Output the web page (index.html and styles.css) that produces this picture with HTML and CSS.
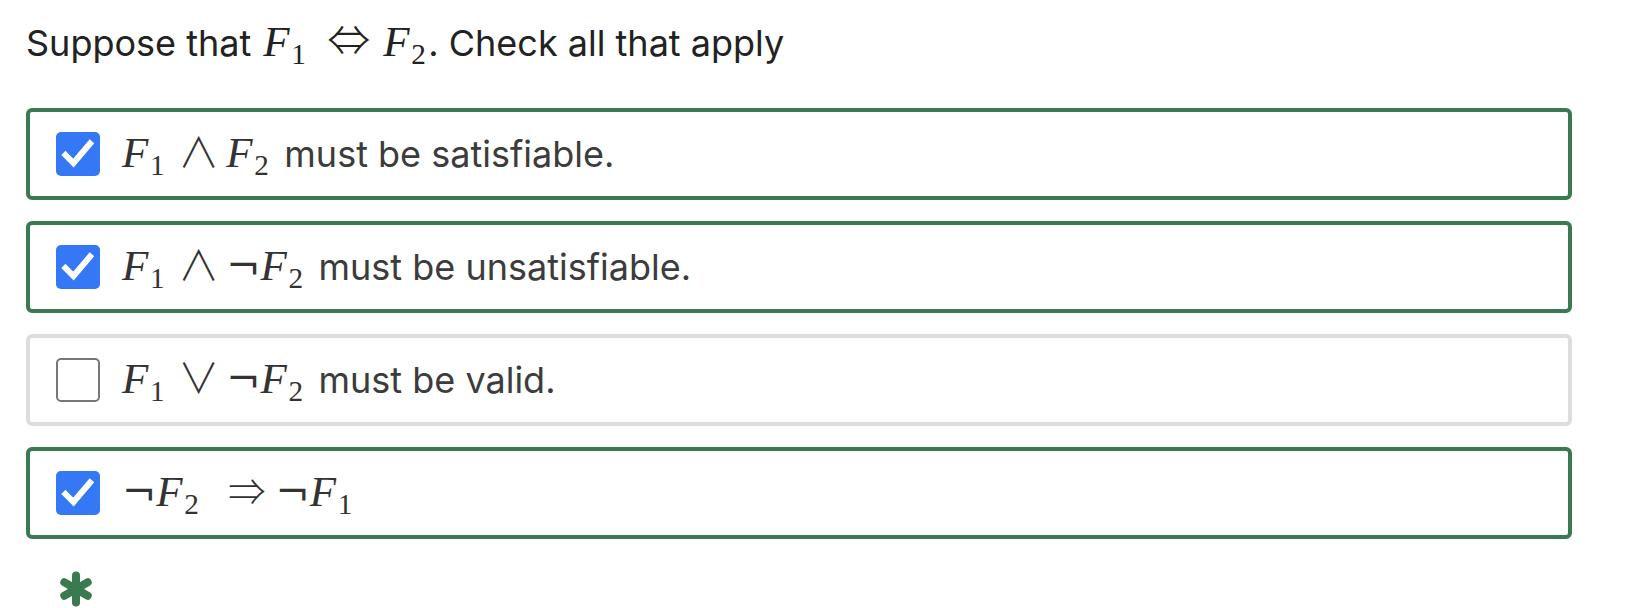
FILE: index.html
```html
<!DOCTYPE html>
<html lang="en">
<head>
<meta charset="utf-8">
<title>Question</title>
<link rel="stylesheet" href="styles.css">
</head>
<body>
<main class="question">
  <p class="prompt">Suppose that <span class="math"><span class="mi">F</span><span class="sub">1</span><span class="rel iff">⇔</span><span class="mi">F</span><span class="sub">2</span></span>. Check all that apply</p>
  <ul class="options">
    <li class="option is-selected">
      <span class="box is-checked"><svg viewBox="0 0 44 44" width="44" height="44"><path d="M9.5 23 L17.5 31 L34 11.5" fill="none" stroke="#fff" stroke-width="6" stroke-linecap="square" stroke-linejoin="miter"/></svg></span>
      <span class="label"><span class="math"><span class="mi">F</span><span class="sub">1</span><span class="bin">∧</span><span class="mi">F</span><span class="sub">2</span></span> must be satisfiable.</span>
    </li>
    <li class="option is-selected">
      <span class="box is-checked"><svg viewBox="0 0 44 44" width="44" height="44"><path d="M9.5 23 L17.5 31 L34 11.5" fill="none" stroke="#fff" stroke-width="6" stroke-linecap="square" stroke-linejoin="miter"/></svg></span>
      <span class="label"><span class="math"><span class="mi">F</span><span class="sub">1</span><span class="bin">∧</span><span class="mo">¬</span><span class="mi">F</span><span class="sub">2</span></span> must be unsatisfiable.</span>
    </li>
    <li class="option">
      <span class="box"></span>
      <span class="label"><span class="math"><span class="mi">F</span><span class="sub">1</span><span class="bin">∨</span><span class="mo">¬</span><span class="mi">F</span><span class="sub">2</span></span> must be valid.</span>
    </li>
    <li class="option is-selected">
      <span class="box is-checked"><svg viewBox="0 0 44 44" width="44" height="44"><path d="M9.5 23 L17.5 31 L34 11.5" fill="none" stroke="#fff" stroke-width="6" stroke-linecap="square" stroke-linejoin="miter"/></svg></span>
      <span class="label"><span class="math"><span class="mo">¬</span><span class="mi">F</span><span class="sub">2</span><span class="rel implies">⇒</span><span class="mo">¬</span><span class="mi">F</span><span class="sub">1</span></span></span>
    </li>
  </ul>
  <div class="status">
    <svg class="asterisk" viewBox="0 0 36 36" width="36" height="36">
      <g stroke="#3a7a50" stroke-width="8" stroke-linecap="round">
        <line x1="18" y1="4.5" x2="18" y2="31.5"/>
        <line x1="6.3" y1="11.25" x2="29.7" y2="24.75"/>
        <line x1="6.3" y1="24.75" x2="29.7" y2="11.25"/>
      </g>
    </svg>
  </div>
</main>
</body>
</html>
```

FILE: styles.css
```css
html, body {
  margin: 0;
  padding: 0;
  background: #ffffff;
}

body {
  font-family: Inter, "Liberation Sans", sans-serif;
}

.question {
  width: 1546px;
  padding: 16px 0 0 26px;
}

.prompt {
  margin: 0;
  font-size: 36px;
  line-height: 54px;
  height: 54px;
  color: #222222;
}

.math {
  font-family: "Liberation Serif", "DejaVu Serif", serif;
  font-size: 43px;
  line-height: 1;
  color: #333333;
  white-space: nowrap;
}

.prompt .math {
  color: #222222;
  margin-left: 2px;
}

.mi {
  font-style: italic;
  margin-right: 0.04em;
}

.sub {
  font-size: 0.68em;
  vertical-align: -0.28em;
  line-height: 0;
  margin-right: 0.08em;
}

.bin {
  margin: 0 7px 0 11px;
  font-family: "Noto Sans CJK JP", "DejaVu Serif", sans-serif;
  font-weight: 300;
  font-size: 0.96em;
  line-height: 0;
}

.rel {
  font-family: "Noto Sans CJK JP", "DejaVu Serif", sans-serif;
  font-weight: 300;
  line-height: 0;
}

.rel.iff {
  font-size: 1em;
  margin: 0 13px 0 19px;
}

.rel.implies {
  font-size: 0.87em;
  margin: 0 10px 0 27px;
}

.mo {
  font-family: "DejaVu Serif", serif;
  font-size: 0.95em;
  line-height: 0;
}

.options {
  list-style: none;
  margin: 38px 0 0;
  padding: 0;
  display: flex;
  flex-direction: column;
  gap: 21px;
}

.option {
  box-sizing: border-box;
  height: 92px;
  border: 4px solid #dddddd;
  border-radius: 6px;
  padding: 0 26px;
  display: flex;
  align-items: center;
  gap: 22px;
}

.option.is-selected {
  border-color: #3a7a50;
}

.box {
  box-sizing: border-box;
  flex: 0 0 44px;
  width: 44px;
  height: 44px;
  border: 2px solid #777777;
  border-radius: 5px;
  background: #ffffff;
  display: flex;
  align-items: center;
  justify-content: center;
}

.box.is-checked {
  border: none;
  background: #3478f6;
}

.box svg {
  display: block;
}

.label {
  font-size: 36px;
  line-height: 54px;
  color: #3c3c3c;
}

.label .math {
  margin-right: 3px;
}

.status {
  padding: 32px 0 0 32px;
}

.asterisk {
  display: block;
}
```
